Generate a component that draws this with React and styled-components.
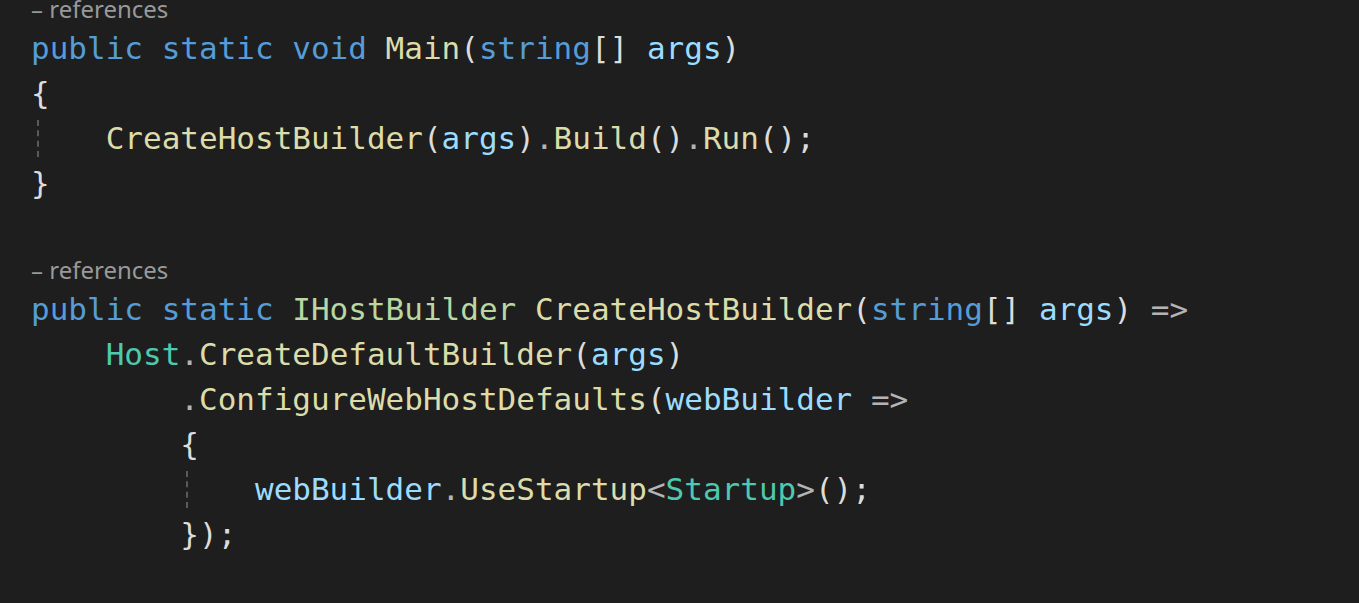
import React from 'react';
import styled, { createGlobalStyle } from 'styled-components';

const GlobalStyle = createGlobalStyle`
	html, body {
		margin: 0;
		padding: 0;
		background: #1e1e1e;
	}
`;

const colors = {
	kw: '#569cd6',
	fn: '#dcdcaa',
	param: '#9cdcfe',
	cls: '#4ec9b0',
	iface: '#b8d7a3',
	punc: '#dcdcdc',
	op: '#b4b4b4',
};

const CHAR = 18.66;

const Editor = styled.div`
	background: #1e1e1e;
	height: 603px;
	overflow: hidden;
	padding-left: 31px;
	box-sizing: border-box;
`;

const Code = styled.div`
	margin-top: -10px;
	display: flex;
	flex-direction: column;
`;

const Lens = styled.div`
	height: 36px;
	line-height: 38px;
	font-family: 'Noto Sans', 'Open Sans', sans-serif;
	font-size: 24px;
	color: #999999;
	white-space: pre;
`;

const Line = styled.div`
	position: relative;
	height: 45px;
	line-height: 45px;
	font-family: 'DejaVu Sans Mono', monospace;
	font-size: 31px;
	white-space: pre;
	color: ${colors.punc};
`;

const Token = styled.span`
	color: ${props => colors[props.$kind] || colors.punc};
`;

const Guide = styled.span`
	position: absolute;
	top: 4px;
	bottom: 4px;
	left: ${props => props.$col * CHAR + 6}px;
	width: 0;
	border-left: 2px dashed #5a5a5a;
`;

const lines = [
	{ lens: true },
	{ t: [['kw', 'public static void '], ['fn', 'Main'], ['punc', '('], ['kw', 'string'], ['punc', '[] '], ['param', 'args'], ['punc', ')']] },
	{ t: [['punc', '{']] },
	{ guide: 0, t: [['punc', '    '], ['fn', 'CreateHostBuilder'], ['punc', '('], ['param', 'args'], ['punc', ')'], ['op', '.'], ['fn', 'Build'], ['punc', '()'], ['op', '.'], ['fn', 'Run'], ['punc', '();']] },
	{ t: [['punc', '}']] },
	{ t: [] },
	{ lens: true },
	{ t: [['kw', 'public static '], ['iface', 'IHostBuilder'], ['punc', ' '], ['fn', 'CreateHostBuilder'], ['punc', '('], ['kw', 'string'], ['punc', '[] '], ['param', 'args'], ['punc', ') '], ['op', '=>']] },
	{ t: [['punc', '    '], ['cls', 'Host'], ['op', '.'], ['fn', 'CreateDefaultBuilder'], ['punc', '('], ['param', 'args'], ['punc', ')']] },
	{ t: [['punc', '        '], ['op', '.'], ['fn', 'ConfigureWebHostDefaults'], ['punc', '('], ['param', 'webBuilder'], ['punc', ' '], ['op', '=>']] },
	{ t: [['punc', '        {']] },
	{ guide: 8, t: [['punc', '            '], ['param', 'webBuilder'], ['op', '.'], ['fn', 'UseStartup'], ['op', '<'], ['cls', 'Startup'], ['op', '>'], ['punc', '();']] },
	{ t: [['punc', '        });']] },
];

const App = () => (
	<>
		<GlobalStyle />
		<Editor>
			<Code>
				{lines.map((line, i) =>
					line.lens ? (
						<Lens key={i}>– references</Lens>
					) : (
						<Line key={i}>
							{line.guide !== undefined && <Guide $col={line.guide} />}
							{line.t.map(([kind, text], j) => (
								<Token key={j} $kind={kind}>
									{text}
								</Token>
							))}
							{line.t.length === 0 && ' '}
						</Line>
					)
				)}
			</Code>
		</Editor>
	</>
);

export default App;
